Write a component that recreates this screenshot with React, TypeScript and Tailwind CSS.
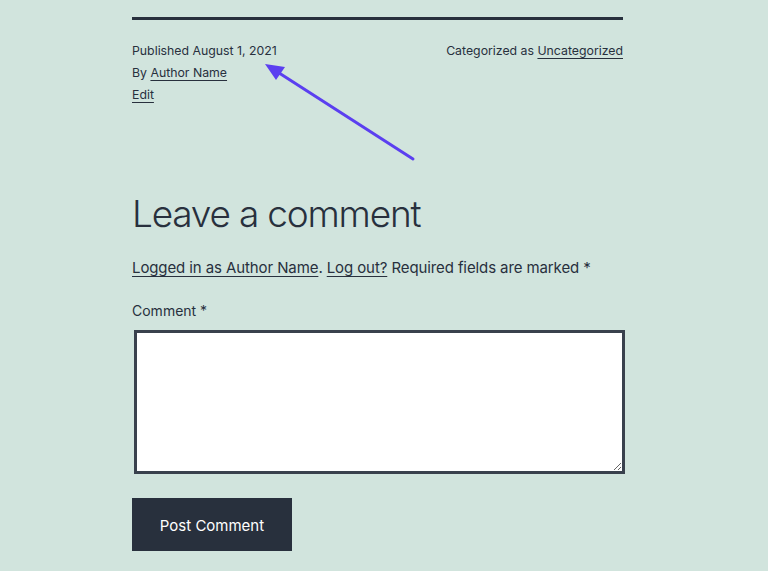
export default function App() {
  return (
    <div
      className="relative min-h-[571px] w-full bg-[#d1e4dd] text-[#28303d]"
      style={{ fontFamily: "Inter, 'Noto Sans', sans-serif" }}
    >
      <div className="ml-[132px] w-[491px] pt-[17px]">
        <div className="h-[3px] bg-[#28303d]" />

        <div className="mt-[20px] flex justify-between text-[12.3px] leading-[22px]">
          <div>
            <div>Published August 1, 2021</div>
            <div>
              By <a className="underline underline-offset-[3px]">Author Name</a>
            </div>
            <div>
              <a className="underline underline-offset-[3px]">Edit</a>
            </div>
          </div>
          <div>
            Categorized as <a className="underline underline-offset-[3px]">Uncategorized</a>
          </div>
        </div>

        <h2 className="mt-[84px] text-[37px] font-light leading-[48px] tracking-[-1.2px]">
          Leave a comment
        </h2>

        <p className="mt-[18px] whitespace-nowrap text-[15px] leading-[24px] tracking-[-0.1px]">
          <a className="underline underline-offset-[3px]">Logged in as Author Name</a>.{" "}
          <a className="underline underline-offset-[3px]">Log out?</a> Required fields are marked *
        </p>

        <label className="mt-[21px] block text-[14px] leading-[20px]">Comment *</label>

        <textarea className="mt-[9px] ml-[2px] block h-[144px] w-[491px] border-[3px] border-[#39414d] bg-white" />

        <button className="mt-[24px] h-[53px] w-[160px] bg-[#28303d] pt-[3px] text-[15px] text-white">
          Post Comment
        </button>
      </div>

      <svg className="absolute left-0 top-0" width="768" height="571" viewBox="0 0 768 571">
        <line x1="413" y1="159" x2="276" y2="71" stroke="#5b3ff0" strokeWidth="3" strokeLinecap="round" />
        <polygon points="265,64 285,67 276,80" fill="#5b3ff0" />
      </svg>
    </div>
  )
}
